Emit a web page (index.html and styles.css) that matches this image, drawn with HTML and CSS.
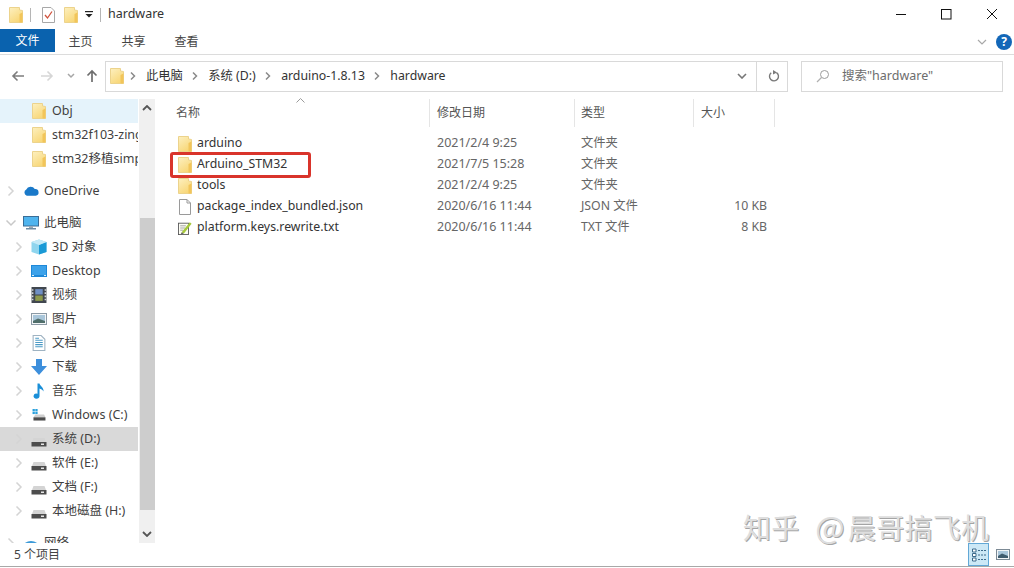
FILE: index.html
```html
<!DOCTYPE html>
<html lang="zh">
<head>
<meta charset="utf-8">
<title>hardware</title>
<link rel="stylesheet" href="styles.css">
</head>
<body>
<svg class="defs" width="0" height="0" aria-hidden="true">
  <defs>
    <linearGradient id="fgrad" x1="0" y1="0" x2="0.6" y2="1">
      <stop offset="0" stop-color="#fdf0c0"/>
      <stop offset="1" stop-color="#f8d778"/>
    </linearGradient>
    <symbol id="folder" viewBox="0 0 14 16">
      <path d="M0.5 0.5H10.500V3L13.500 3.500V15.500H0.500Z" fill="url(#fgrad)" stroke="#ecd38c" stroke-width="1"/>
      <path d="M10.500 7L13.500 5.500V15.500H10.500Z" fill="#f2c55a"/>
    </symbol>
    <symbol id="chev-right" viewBox="0 0 8 12">
      <path d="M1.5 1.5L6 6L1.5 10.5" fill="none" stroke="#d4d4d4" stroke-width="1.5"/>
    </symbol>
    <symbol id="crumb" viewBox="0 0 6 10">
      <path d="M1 1.5L4.5 5L1 8.5" fill="none" stroke="#8a8a8a" stroke-width="1.5"/>
    </symbol>
    <symbol id="drive" viewBox="0 0 16 10">
      <path d="M2.5 1H13.5L15 5H1Z" fill="#d4d4d4"/>
      <rect x="0.5" y="5" width="15" height="4.5" fill="#4d4d4d"/>
      <rect x="10" y="6.5" width="3" height="1.5" fill="#e6e6e6"/>
    </symbol>
  </defs>
</svg>

<div class="window">
  <header class="titlebar">
    <svg class="ico-folder qa-first"><use href="#folder"/></svg>
    <span class="qa-sep"></span>
    <svg class="qa-doc" viewBox="0 0 13 16">
      <path d="M0.5 0.5H9L12.5 4V15.5H0.5Z" fill="#fff" stroke="#a8a8a8"/>
      <path d="M3 8L5.5 11L10 4.5" fill="none" stroke="#d0523c" stroke-width="1.3"/>
    </svg>
    <svg class="ico-folder qa-folder2"><use href="#folder"/></svg>
    <svg class="qa-down" viewBox="0 0 8 7"><rect y="0" width="8" height="1.2" fill="#222"/><path d="M0.5 3H7.5L4 6.5Z" fill="#222"/></svg>
    <span class="qa-sep qa-sep2"></span>
    <span class="title-text">hardware</span>
    <div class="win-controls">
      <svg class="win-btn" viewBox="0 0 46 16"><rect x="19" y="8" width="10" height="1" fill="#111"/></svg>
      <svg class="win-btn" viewBox="0 0 46 16"><rect x="18.500" y="3.500" width="9.500" height="9.500" fill="none" stroke="#111" stroke-width="1"/></svg>
      <svg class="win-btn" viewBox="0 0 46 16"><path d="M18 3L28 13M28 3L18 13" stroke="#111" stroke-width="1" fill="none"/></svg>
    </div>
  </header>

  <nav class="ribbon">
    <span class="tab tab-file">文件</span>
    <span class="tab">主页</span>
    <span class="tab">共享</span>
    <span class="tab">查看</span>
    <svg class="ribbon-chev" viewBox="0 0 10 6"><path d="M1 1L5 5L9 1" fill="none" stroke="#a8a8a8" stroke-width="1.2"/></svg>
    <span class="help">?</span>
  </nav>

  <div class="addressrow">
    <svg class="nav-back" viewBox="0 0 14 12"><path d="M13 6H2M6.5 1.5L2 6L6.5 10.5" fill="none" stroke="#7d7d7d" stroke-width="1.6"/></svg>
    <svg class="nav-fwd" viewBox="0 0 14 12"><path d="M1 6H12M7.5 1.5L12 6L7.5 10.5" fill="none" stroke="#d6d6d6" stroke-width="1.6"/></svg>
    <svg class="nav-recent" viewBox="0 0 8 6"><path d="M1 1L4 4L7 1" fill="none" stroke="#a6a6a6" stroke-width="1.5"/></svg>
    <svg class="nav-up" viewBox="0 0 12 14"><path d="M6 13V2M1.5 6.5L6 2L10.5 6.5" fill="none" stroke="#6e6e6e" stroke-width="1.7"/></svg>
    <div class="addressbar">
      <svg class="ico-folder addr-folder"><use href="#folder"/></svg>
      <svg class="crumb"><use href="#crumb"/></svg><span class="crumb-text">此电脑</span>
      <svg class="crumb"><use href="#crumb"/></svg><span class="crumb-text">系统 (D:)</span>
      <svg class="crumb"><use href="#crumb"/></svg><span class="crumb-text">arduino-1.8.13</span>
      <svg class="crumb"><use href="#crumb"/></svg><span class="crumb-text">hardware</span>
      <svg class="addr-drop" viewBox="0 0 10 6"><path d="M1 1L5 5L9 1" fill="none" stroke="#777" stroke-width="1.6"/></svg>
      <span class="addr-refresh">
        <svg class="refresh" viewBox="0 0 12 14"><path d="M3.2 3.8A4.5 4.5 0 1 0 8.5 3.6" fill="none" stroke="#7a7a7a" stroke-width="1.4"/><path d="M5 1L9 3.6L5 5.5Z" fill="#7a7a7a"/></svg>
      </span>
    </div>
    <div class="searchbox">
      <svg class="search-ico" viewBox="0 0 14 14"><circle cx="8.5" cy="5.5" r="4" fill="none" stroke="#9c9c9c"/><path d="M5.5 8.5L1 13" stroke="#b0b0b0" stroke-width="1.2"/></svg>
      <span>搜索"hardware"</span>
    </div>
  </div>

  <main class="main">
    <aside class="sidebar">
      <div class="tree">
        <div class="node selected l2"><span class="chev"></span><svg class="ico-folder"><use href="#folder"/></svg><span class="label">Obj</span></div>
        <div class="node l2"><span class="chev"></span><svg class="ico-folder"><use href="#folder"/></svg><span class="label">stm32f103-zingto</span></div>
        <div class="node l2"><span class="chev"></span><svg class="ico-folder"><use href="#folder"/></svg><span class="label">stm32移植simpleFOC</span></div>

        <div class="node l1 gap"><svg class="chev-svg"><use href="#chev-right"/></svg>
          <svg class="ico16" viewBox="0 0 17 11"><path d="M4 10.5A3.5 3.5 0 0 1 3.5 4A5 5 0 0 1 12.5 3.500A3.500 3.500 0 0 1 13.500 10.500Z" fill="#1a79c9"/></svg>
          <span class="label">OneDrive</span></div>

        <div class="node l1 gap"><svg class="chev-down" viewBox="0 0 12 8"><path d="M1.500 1.500L6 6L10.500 1.500" fill="none" stroke="#c8c8c8" stroke-width="1.500"/></svg>
          <svg class="ico16 pc" viewBox="0 0 16 14"><rect x="0.500" y="0.500" width="15" height="9.500" fill="#4fb4ee" stroke="#3a6d96"/><rect x="6" y="10" width="4" height="2" fill="#9aa9b5"/><rect x="3" y="12" width="10" height="1.500" fill="#6e8ca3"/></svg>
          <span class="label">此电脑</span></div>

        <div class="node l2"><svg class="chev-svg"><use href="#chev-right"/></svg>
          <svg class="ico16 sq" viewBox="0 0 16 16"><path d="M8 0.500L15.500 3V13L8 15.500L0.500 13V3Z" fill="#8fd5ee"/><path d="M8 6V15.500L15.500 13V3Z" fill="#1a9ad6"/><path d="M0.500 3L8 6L15.500 3L8 0.500Z" fill="#c5eaf7"/></svg>
          <span class="label">3D 对象</span></div>
        <div class="node l2"><svg class="chev-svg"><use href="#chev-right"/></svg>
          <svg class="ico16" viewBox="0 0 16 12"><rect width="16" height="12" fill="#1e88d8"/><rect x="1" y="1" width="14" height="9" fill="#3ca2ea"/><rect x="1" y="10" width="2" height="1" fill="#d8eefb"/><rect x="13" y="10" width="2" height="1" fill="#d8eefb"/></svg>
          <span class="label">Desktop</span></div>
        <div class="node l2"><svg class="chev-svg"><use href="#chev-right"/></svg>
          <svg class="ico16 sq" viewBox="0 0 14 15"><rect width="14" height="15" fill="#41474f"/><rect x="3.500" y="2" width="7" height="5" fill="#6f8fc4"/><rect x="3.500" y="8" width="7" height="5" fill="#8d9a4c"/><path d="M1 2V13M13 2V13" stroke="#cfd4d8" stroke-width="1.500" stroke-dasharray="1.500 1.500"/></svg>
          <span class="label">视频</span></div>
        <div class="node l2"><svg class="chev-svg"><use href="#chev-right"/></svg>
          <svg class="ico16" viewBox="0 0 16 12"><rect x="0.500" y="0.500" width="15" height="11" fill="#f2f5f7" stroke="#8c9aa5"/><rect x="2" y="2" width="12" height="8" fill="#a9c6da"/><path d="M2 8L7 5.500L14 8V10H2Z" fill="#4f6e6a"/></svg>
          <span class="label">图片</span></div>
        <div class="node l2"><svg class="chev-svg"><use href="#chev-right"/></svg>
          <svg class="ico16 sq" viewBox="0 0 12 15"><path d="M0.500 0.500H8L11.500 4V14.500H0.500Z" fill="#fff" stroke="#9fb3c2"/><path d="M2.500 5H9.500M2.500 7H9.500M2.500 9H9.500M2.500 11H9.500M2.500 3H6" stroke="#4b9ac6" stroke-width="1"/></svg>
          <span class="label">文档</span></div>
        <div class="node l2"><svg class="chev-svg"><use href="#chev-right"/></svg>
          <svg class="ico16 sq" viewBox="0 0 16 16"><path d="M5 0H11V7H16L8 16L0 7H5Z" fill="#3d8fdc"/></svg>
          <span class="label">下载</span></div>
        <div class="node l2"><svg class="chev-svg"><use href="#chev-right"/></svg>
          <svg class="ico16 sq" viewBox="0 0 12 16"><path d="M4.500 0.500H6.500C7 3 11 4.500 10.500 8.500C9.500 6.500 8 6 6.500 5.500V13A3 2.600 0 1 1 4.500 10.800Z" fill="#1a8fd8"/></svg>
          <span class="label">音乐</span></div>
        <div class="node l2"><svg class="chev-svg"><use href="#chev-right"/></svg>
          <svg class="ico16" viewBox="0 0 16 13"><rect x="1" y="0" width="2.500" height="2.500" fill="#29a0dc"/><rect x="4" y="0" width="2.500" height="2.500" fill="#29a0dc"/><rect x="1" y="3" width="2.500" height="2.500" fill="#29a0dc"/><rect x="4" y="3" width="2.500" height="2.500" fill="#29a0dc"/><path d="M4 6H13.500L15 9H2Z" fill="#cfcfcf"/><rect x="2" y="9" width="13" height="3.500" fill="#4d4d4d"/></svg>
          <span class="label">Windows (C:)</span></div>
        <div class="node l2 current"><svg class="chev-svg"><use href="#chev-right"/></svg>
          <svg class="ico16 dr"><use href="#drive"/></svg>
          <span class="label">系统 (D:)</span></div>
        <div class="node l2"><svg class="chev-svg"><use href="#chev-right"/></svg>
          <svg class="ico16 dr"><use href="#drive"/></svg>
          <span class="label">软件 (E:)</span></div>
        <div class="node l2"><svg class="chev-svg"><use href="#chev-right"/></svg>
          <svg class="ico16 dr"><use href="#drive"/></svg>
          <span class="label">文档 (F:)</span></div>
        <div class="node l2"><svg class="chev-svg"><use href="#chev-right"/></svg>
          <svg class="ico16 dr"><use href="#drive"/></svg>
          <span class="label">本地磁盘 (H:)</span></div>

        <div class="node l1 gap"><svg class="chev-svg"><use href="#chev-right"/></svg>
          <svg class="ico16" viewBox="0 0 16 12"><path d="M0 10A8 6 0 0 1 16 10V12H0Z" fill="#3c9ad8"/></svg>
          <span class="label">网络</span></div>
      </div>
      <div class="scrollbar">
        <svg class="sb-arrow up" viewBox="0 0 10 6"><path d="M1 5L5 1L9 5" fill="none" stroke="#555" stroke-width="1.800"/></svg>
        <span class="sb-thumb"></span>
        <svg class="sb-arrow down" viewBox="0 0 10 6"><path d="M1 1L5 5L9 1" fill="none" stroke="#555" stroke-width="1.800"/></svg>
      </div>
    </aside>

    <section class="files">
      <div class="head">
        <span class="col first">名称<svg class="sort" viewBox="0 0 9 5"><path d="M0.500 4.500L4.500 0.500L8.500 4.500" fill="none" stroke="#9a9a9a"/></svg></span>
        <span class="col">修改日期</span>
        <span class="col">类型</span>
        <span class="col">大小</span>
      </div>
      <div class="row">
        <span class="name"><svg class="ico-folder row-ico"><use href="#folder"/></svg>arduino</span>
        <span class="date">2021/2/4 9:25</span><span class="type">文件夹</span><span class="size"></span>
      </div>
      <div class="row">
        <span class="name"><svg class="ico-folder row-ico"><use href="#folder"/></svg>Arduino_STM32<span class="redbox"></span></span>
        <span class="date">2021/7/5 15:28</span><span class="type">文件夹</span><span class="size"></span>
      </div>
      <div class="row">
        <span class="name"><svg class="ico-folder row-ico"><use href="#folder"/></svg>tools</span>
        <span class="date">2021/2/4 9:25</span><span class="type">文件夹</span><span class="size"></span>
      </div>
      <div class="row">
        <span class="name"><svg class="row-ico" viewBox="0 0 14 16"><path d="M1.500 0.500H9L12.500 4V15.500H1.500Z" fill="#fff" stroke="#9a9a9a"/><path d="M9 0.500V4H12.500" fill="none" stroke="#9a9a9a"/></svg>package_index_bundled.json</span>
        <span class="date">2020/6/16 11:44</span><span class="type">JSON 文件</span><span class="size">10 KB</span>
      </div>
      <div class="row">
        <span class="name"><svg class="row-ico" viewBox="0 0 16 16"><rect x="0.500" y="2.500" width="11.500" height="13" fill="#fdfdf4" stroke="#555"/><path d="M2.500 5.500H9M2.500 8H8M2.500 10.500H6" stroke="#9a9a9a"/><path d="M4 13L13.500 1.500L15.500 3L7 14Z" fill="#a5c83a"/><path d="M4 13L3.500 15L7 14Z" fill="#444"/></svg>platform.keys.rewrite.txt</span>
        <span class="date">2020/6/16 11:44</span><span class="type">TXT 文件</span><span class="size">8 KB</span>
      </div>
    </section>
  </main>

  <footer class="statusbar">
    <span class="count">5 个项目</span>
    <div class="views">
      <span class="view active">
        <svg viewBox="0 0 16 16" width="16" height="16"><path d="M1.500 2H5V5H1.500ZM1.500 6.500H5V9.500H1.500ZM1.500 11H5V14H1.500Z" fill="#fff" stroke="#3d6b8c"/><path d="M7 3.500H15M7 8H15M7 12.500H15" stroke="#3d6b8c" stroke-dasharray="2 1"/></svg>
      </span>
      <span class="view">
        <svg viewBox="0 0 14 11" width="14" height="11"><rect x="0.500" y="0.500" width="13" height="10" fill="#f2f5f7" stroke="#7c8a95"/><rect x="2" y="2" width="10" height="7" fill="#a9c6da"/><path d="M2 7L6 4.500L12 7V9H2Z" fill="#3f5c6e"/></svg>
      </span>
    </div>
  </footer>

  <div class="watermark">知乎 <span class="at">@</span>晨哥搞飞机</div>
</div>
</body>
</html>
```
FILE: styles.css
```css
* { box-sizing: border-box; }
html, body { margin: 0; padding: 0; }
body {
  width: 1014px;
  height: 568px;
  overflow: hidden;
  background: #fff;
  color: #3f3f3f;
  font-family: "Noto Sans", "Noto Sans CJK SC", sans-serif;
  font-size: 12.5px;
  line-height: 1;
}
.defs { position: absolute; }
.window { position: relative; display: flex; flex-direction: column; height: 568px; }

.ico-folder { width: 14px; height: 16px; flex: none; display: block; }

/* title bar */
.titlebar { height: 29px; display: flex; align-items: center; flex: none; padding-left: 9px; }
.qa-sep { width: 1px; height: 14px; background: #b5b5b5; margin: 0 11px 0 7px; flex: none; }
.qa-doc { width: 13px; height: 16px; flex: none; }
.qa-folder2 { margin-left: 9px; }
.qa-down { width: 8px; height: 7px; margin-left: 7px; flex: none; }
.qa-sep2 { margin: 0 7px 0 7px; }
.title-text { color: #333; font-size: 12.5px; }
.win-controls { margin-left: auto; display: flex; margin-right: -1px; margin-bottom: 2px; }
.win-btn { width: 46px; height: 16px; display: block; }

/* ribbon */
.ribbon { height: 26px; display: flex; align-items: center; flex: none; border-bottom: 1px solid #dcdcdc; }
.tab { width: 53px; text-align: center; color: #444; font-size: 12px; }
.tab-file { width: 55px; height: 23px; line-height: 23px; background: #0a62ae; color: #fff; margin-right: -1px; align-self: flex-start; }
.ribbon-chev { width: 10px; height: 6px; margin-left: auto; }
.help { width: 16px; height: 16px; margin: 0 2px 0 9px; border-radius: 50%; background: #1367b8; color: #fff; font-weight: 700; font-size: 12px; line-height: 16px; text-align: center; }

/* address row */
.addressrow { height: 44px; display: flex; align-items: center; flex: none; padding-bottom: 2px; }
.nav-back { width: 14px; height: 12px; margin-left: 11px; flex: none; }
.nav-fwd { width: 14px; height: 12px; margin-left: 15px; flex: none; }
.nav-recent { width: 8px; height: 6px; margin-left: 13px; flex: none; }
.nav-up { width: 12px; height: 14px; margin-left: 11px; flex: none; }
.addressbar { margin-left: 7px; width: 683px; height: 31px; border: 1px solid #d9d9d9; display: flex; align-items: center; padding-left: 4px; color: #333; }
.addr-folder { margin-right: 6px; }
.crumb { width: 6px; height: 10px; flex: none; margin-right: 10px; }
.crumb-text { margin-right: 9.4px; font-size: 12.3px; }
.addr-drop { width: 10px; height: 6px; margin-left: auto; margin-right: 9px; flex: none; }
.addr-refresh { width: 31px; height: 100%; border-left: 1px solid #d9d9d9; display: flex; align-items: center; justify-content: center; flex: none; padding-left: 3px; }
.refresh { width: 12px; height: 14px; }
.searchbox { margin-left: 13px; width: 202px; height: 31px; border: 1px solid #d9d9d9; display: flex; align-items: center; padding-left: 14px; color: #6d6d6d; }
.search-ico { width: 14px; height: 14px; margin-right: 12px; flex: none; }

/* main */
.main { flex: 1; min-height: 0; display: flex; }
.sidebar { width: 155px; flex: none; display: flex; overflow: hidden; }
.tree { width: 139px; flex: none; overflow: hidden; }
.node { height: 24px; display: flex; align-items: center; white-space: nowrap; overflow: hidden; margin-right: 1px; }
.node.gap { margin-top: 8px; }
.node.selected { background: #e5f3fb; }
.node.current { background: #d9d9d9; }
.l1 { padding-left: 7px; }
.l2 { padding-left: 15px; }
.chev { width: 8px; flex: none; }
.chev-svg { width: 8px; height: 12px; flex: none; }
.chev-down { width: 12px; height: 8px; margin-left: -2px; margin-right: -2px; flex: none; }
.l1 .ico16 { margin-left: 8px; }
.l1 .label { margin-left: 5px; }
.l2 .ico-folder { margin-left: 9px; }
.l2 .ico-folder + .label { margin-left: 6px; }
.l2 .ico16 { margin-left: 8px; }
.ico16 { width: 16px; height: 12px; flex: none; }
.ico16.sq { height: 16px; }
.ico16.pc { height: 14px; }
.ico16.dr { height: 10px; margin-top: 5px; }
.label { margin-left: 5px; flex: none; }
.l2 .ico16 + .label { margin-left: 5px; }

.scrollbar { width: 16px; flex: none; background: #f0f0f0; display: flex; flex-direction: column; align-items: center; }
.sb-arrow { width: 10px; height: 6px; flex: none; }
.sb-arrow.up { margin: 6px 0 0; }
.sb-thumb { width: 15px; height: 292px; background: #cdcdcd; margin-top: 107px; flex: none; }
.sb-arrow.down { margin-top: 21px; }

/* file list */
.files { flex: 1; min-width: 0; }
.head, .row { display: grid; grid-template-columns: 275px 145px 119px 81px; }
.head { height: 28px; align-items: stretch; margin-bottom: 6px; }
.col { border-right: 1px solid #e5e5e5; padding-left: 7px; display: flex; align-items: center; color: #555; font-size: 12px; }
.col:nth-child(3) { padding-left: 6px; }
.col.first { padding-left: 21px; position: relative; }
.sort { position: absolute; left: 141px; top: -1px; width: 9px; height: 5px; }
.row { height: 21px; align-items: center; color: #666; font-size: 12.3px; }
.row > span { padding-left: 7px; white-space: nowrap; }
.row > span.date { font-size: 12.5px; }
.row > span.type { padding-left: 6px; }
.row > span.name { position: relative; display: flex; align-items: center; padding-left: 23px; color: #333; }
.row > span.size { padding-left: 0; padding-right: 8px; text-align: right; }
.row-ico { width: 14px; height: 16px; margin-right: 5px; flex: none; }
.redbox { position: absolute; left: 15px; top: -5px; width: 141px; height: 26px; border: 3px solid #d9342b; border-radius: 3px; }

/* status */
.statusbar { height: 24px; flex: none; display: flex; align-items: center; border-bottom: 1px solid #a8a8a8; margin-bottom: 1px; padding-left: 14px; font-size: 12px; color: #444; }
.count { padding-right: 10px; }
.views { margin-left: auto; display: flex; align-items: center; margin-right: 1px; gap: 3px; }
.view { width: 21px; height: 23px; display: flex; align-items: center; justify-content: center; }
.view.active { background: #cce8f6; border: 1px solid #62a8d6; }

.watermark { position: absolute; left: 743px; top: 510px; font-size: 28px; color: #dedede; white-space: nowrap; letter-spacing: 0.3px; word-spacing: 9px; text-shadow: 1px 1px 0 #a5a5a5; font-family: "Noto Sans CJK SC", sans-serif; line-height: 32px; }
.at { font-size: 31px; margin-right: 3px; }
```
